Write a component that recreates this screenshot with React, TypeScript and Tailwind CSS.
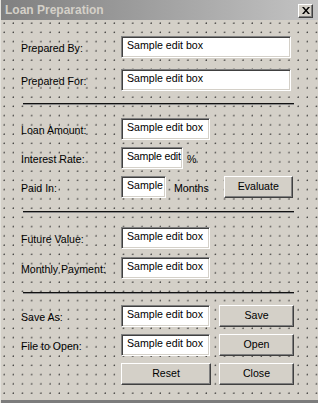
import type { ReactNode } from 'react';

const BOX = 'h-[22px] flex items-center overflow-hidden whitespace-nowrap bg-white pl-[5px] pb-[2px] border border-t-[#808080] border-l-[#808080] border-b-white border-r-white shadow-[inset_1px_1px_0_#404040,inset_-1px_-1px_0_#d4d0c8] text-black';
const BTN = 'h-[22px] flex items-center justify-center pb-[1px] bg-[#d4d0c8] border border-t-white border-l-white border-b-[#404040] border-r-[#404040] shadow-[inset_-1px_-1px_0_#808080] text-black';

function EditBox({ className, text = 'Sample edit box' }: { className: string; text?: string }) {
  return <div className={`${BOX} ${className}`}>{text}</div>;
}

function Button({ className, children }: { className: string; children: ReactNode }) {
  return <div className={`${BTN} ${className}`}>{children}</div>;
}

function Row({ label, className, children }: { label: string; className: string; children: ReactNode }) {
  return (
    <div className={`flex items-center h-[22px] ${className}`}>
      <span className="w-[100px] shrink-0 pt-[3px]">{label}</span>
      {children}
    </div>
  );
}

function Separator({ className }: { className: string }) {
  return <div className={`ml-[2px] w-[271px] h-px bg-[#111] shadow-[0_1px_0_#8a8a8a] ${className}`} />;
}

export default function App() {
  return (
    <div className="w-[318px] h-[403px] flex flex-col bg-[#d4d0c8] border-l border-l-[#e4e2dc] font-['Liberation_Sans',Arial,sans-serif] text-[10.6px] text-black overflow-hidden">
      {/* title bar */}
      <div className="h-[20px] shrink-0 flex items-center justify-between pl-[4px] pr-[5px] bg-gradient-to-r from-[#808080] to-[#c4c4c4]">
        <span className="text-[12px] font-bold text-[#d4d0c8]">Loan Preparation</span>
        <div className="w-[15px] h-[14px] mt-[1px] flex items-center justify-center bg-[#d4d0c8] border border-t-white border-l-white border-b-[#404040] border-r-[#404040] shadow-[inset_-1px_-1px_0_#808080]">
          <svg width="8" height="7" viewBox="0 0 8 7">
            <path d="M0 0h2l2 2.5L6 0h2L5 3.5 8 7H6L4 4.5 2 7H0l3-3.5z" fill="#000" />
          </svg>
        </div>
      </div>

      {/* dialog body */}
      <div className="flex-1 flex flex-col pl-[20px] bg-[radial-gradient(circle_at_1px_1px,#222_0.5px,transparent_0.8px)] bg-[length:9.2px_9.25px] bg-[position:2px_2px]">
        <Row label="Prepared By:" className="mt-[16px]">
          <EditBox className="w-[170px]" />
        </Row>
        <Row label="Prepared For:" className="mt-[11px]">
          <EditBox className="w-[170px]" />
        </Row>

        <Separator className="mt-[12px]" />

        <Row label="Loan Amount:" className="mt-[14px]">
          <EditBox className="w-[89px]" />
        </Row>
        <Row label="Interest Rate:" className="mt-[7px]">
          <EditBox className="w-[62px] pl-[4px] tracking-[-0.2px]" text="Sample edit" />
          <span className="ml-[4px] pt-[4px]">%</span>
        </Row>
        <Row label="Paid In:" className="mt-[7px]">
          <EditBox className="w-[45px]" text="Sample" />
          <span className="ml-[8px] pt-[4px]">Months</span>
          <Button className="ml-[15px] w-[69px]">Evaluate</Button>
        </Row>

        <Separator className="mt-[13px]" />

        <Row label="Future Value:" className="mt-[15px]">
          <EditBox className="w-[89px]" />
        </Row>
        <Row label="Monthly Payment:" className="mt-[8px]">
          <EditBox className="w-[89px]" />
        </Row>

        <Separator className="mt-[13px]" />

        <Row label="Save As:" className="mt-[12px]">
          <EditBox className="w-[89px]" />
          <Button className="ml-[9px] w-[75px]">Save</Button>
        </Row>
        <Row label="File to Open:" className="mt-[7px]">
          <EditBox className="w-[89px]" />
          <Button className="ml-[9px] w-[75px]">Open</Button>
        </Row>
        <div className="flex items-center h-[22px] mt-[7px] pl-[100px]">
          <Button className="w-[90px]">Reset</Button>
          <Button className="ml-[8px] w-[75px]">Close</Button>
        </div>
      </div>

      {/* bottom frame */}
      <div className="h-[3px] shrink-0 bg-[#7c7c7c]" />
    </div>
  );
}
